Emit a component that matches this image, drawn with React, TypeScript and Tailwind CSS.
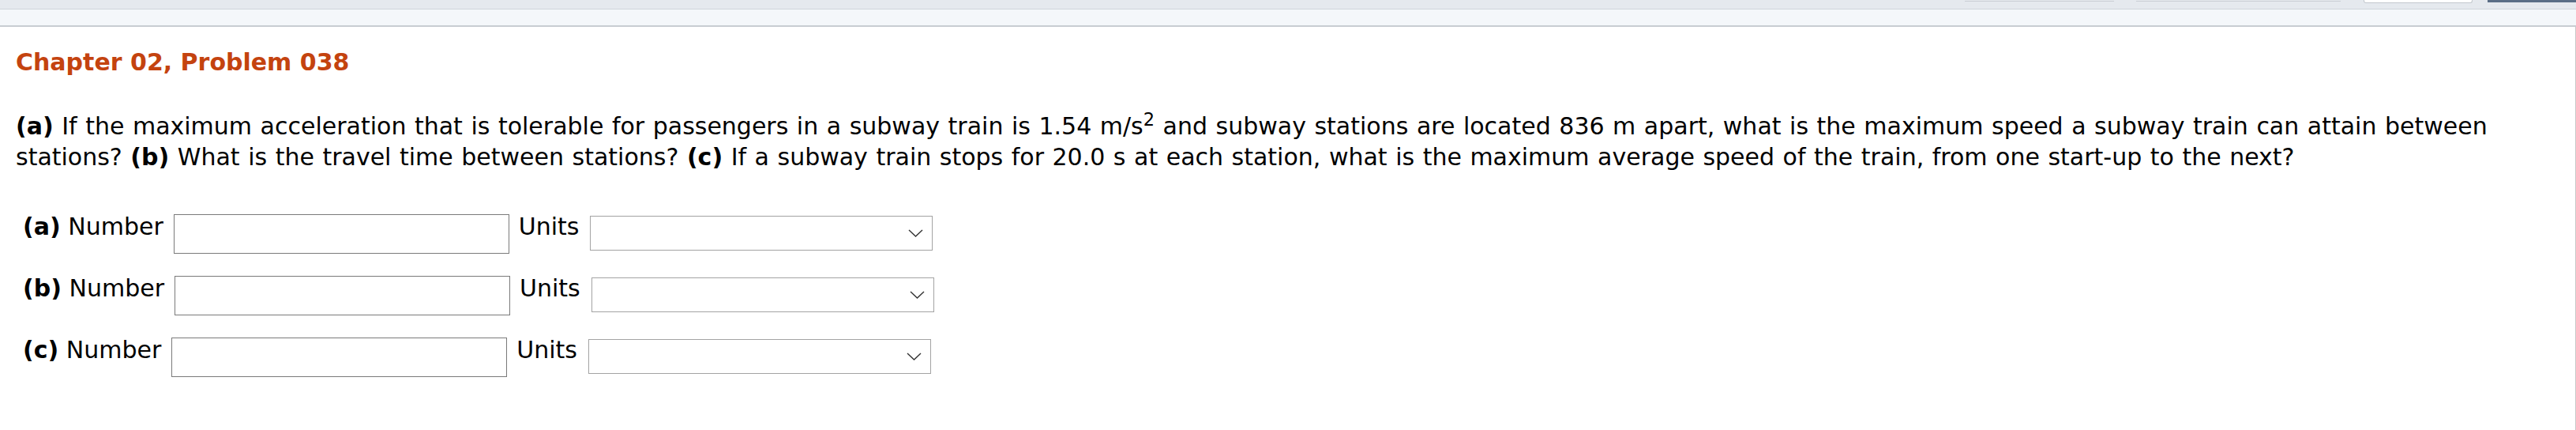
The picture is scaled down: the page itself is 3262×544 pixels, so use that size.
import React from "react";

const Chevron = () => (
  <svg width="19" height="10" viewBox="0 0 19 10" fill="none">
    <path d="M1 1 L9.5 9 L18 1" stroke="#333" strokeWidth="1.4" />
  </svg>
);

function Row({ letter }: { letter: string }) {
  return (
    <div className="flex items-start">
      <span className="leading-[32px] whitespace-nowrap">
        <b>({letter})</b> Number
      </span>
      <div className="ml-[13px] h-[50px] w-[425px] border border-[#7a7a7a] bg-white" />
      <span className="ml-[12px] leading-[32px]">Units</span>
      <div className="ml-[14px] mt-[2px] flex h-[44px] w-[434px] items-center justify-end border border-[#a3a3a3] bg-white pr-[11px]">
        <Chevron />
      </div>
    </div>
  );
}

export default function App() {
  return (
    <div className="min-h-[544px] w-[3262px] bg-white text-black" style={{ fontFamily: '"DejaVu Sans", Verdana, sans-serif' }}>
      <div className="flex h-[12px] items-start justify-end border-b border-[#cfd5db] bg-[#e5e9ee]">
        <div className="mr-[28px] h-[2px] w-[189px] border-b border-[#c9ced4]" />
        <div className="mr-[29px] h-[2px] w-[259px] border-b border-[#c9ced4]" />
        <div className="mr-[19px] h-[4px] w-[138px] rounded-b-[3px] border border-t-0 border-[#c3c8ce] bg-white" />
        <div className="h-[3px] w-[112px] bg-[#5b6e86]" />
      </div>
      <div className="h-[22px] border-b-2 border-[#c8cdd2] bg-[#f4f7fa]" />
      <div className="min-h-[510px] border-r border-[#c8c8c8] pl-[20px] pr-[20px] pt-[27px]">
        <h1 className="text-[30px] font-bold leading-[36px] text-[#c4430f]">Chapter 02, Problem 038</h1>
        <p className="mt-[43px] text-[30px] leading-[39px] [word-spacing:1px]">
          <b>(a)</b> If the maximum acceleration that is tolerable for passengers in a subway train is 1.54 m/s
          <sup>2</sup> and subway stations are located 836 m apart, what is the maximum speed a subway train can
          attain between stations? <b>(b)</b> What is the travel time between stations? <b>(c)</b> If a subway
          train stops for 20.0 s at each station, what is the maximum average speed of the train, from one
          start-up to the next?
        </p>
        <div className="mt-[53px] flex flex-col gap-[28px] pl-[9px] text-[30px]">
          <Row letter="a" />
          <Row letter="b" />
          <Row letter="c" />
        </div>
      </div>
    </div>
  );
}
